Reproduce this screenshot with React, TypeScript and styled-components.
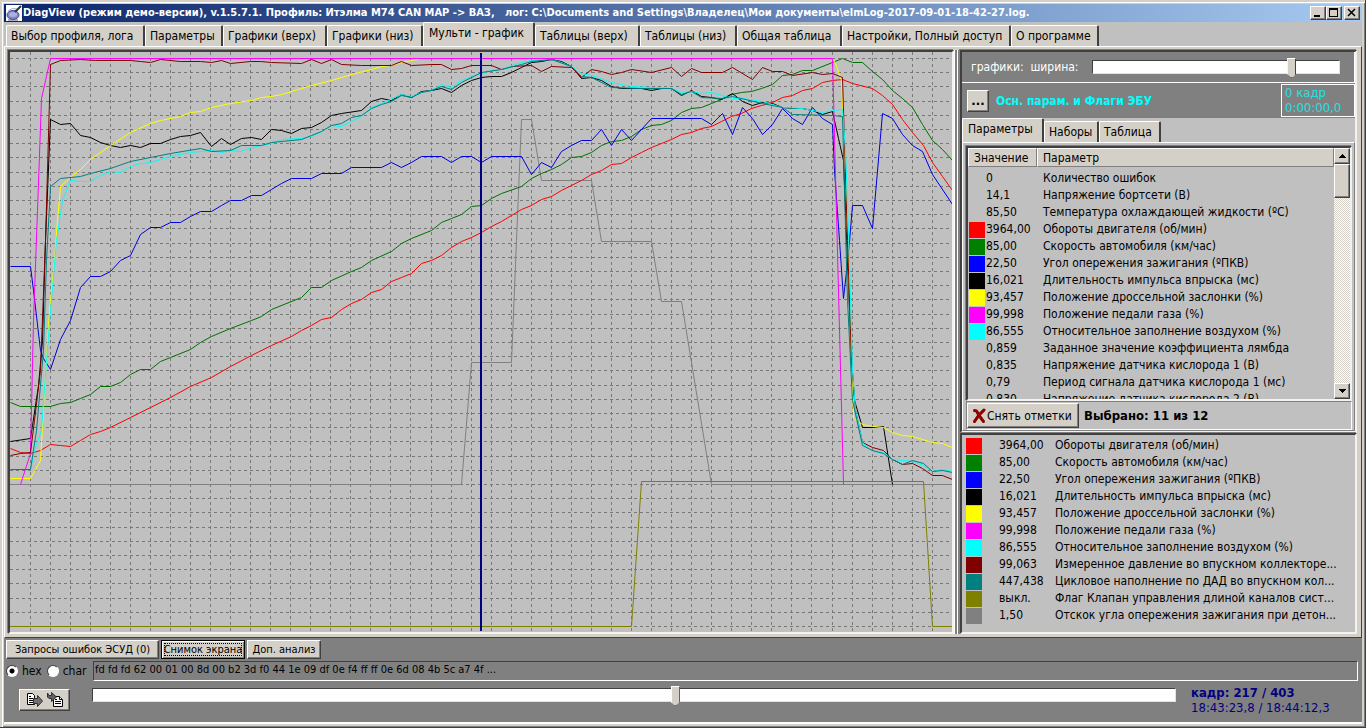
import React, { useState } from "react";
import styled, { createGlobalStyle, css } from "styled-components";

const face = "#d4d0c8";
const silver = "#c0c0c0";
const gray = "#808080";
const dark = "#404040";

const Global = createGlobalStyle`
  * { box-sizing: border-box; }
  body { margin: 0; background: ${face}; }
  body, button, input, table {
    font-family: "DejaVu Sans Condensed", "DejaVu Sans", sans-serif;
    font-size: 12px;
    color: #000;
  }
`;

const raised = css`
  border: 1px solid;
  border-color: #fff ${dark} ${dark} #fff;
  box-shadow: inset -1px -1px 0 ${gray};
  background: ${face};
`;

const sunken = css`
  border: 2px solid;
  border-color: ${dark} #f4f2ee #f4f2ee ${dark};
  box-shadow: -1px -1px 0 ${gray};
`;

const Frame = styled.div`
  display: flex;
  flex-direction: column;
  min-height: 100vh;
  padding: 4px;
  background: ${face};
  box-shadow: inset -1px -1px 0 ${dark}, inset 2px 2px 0 ${face}, inset 3px 3px 0 #fff,
    inset -2px -2px 0 ${gray};
`;

const TitleBar = styled.header`
  display: flex;
  align-items: center;
  height: 18px;
  padding: 0 2px;
  background: linear-gradient(to right, #0a246a, #a6caf0);
`;

const Title = styled.h1`
  flex: 1;
  margin: 0 0 0 1px;
  overflow: hidden;
  color: #fff;
  font-size: 11px;
  font-weight: bold;
  line-height: 18px;
  white-space: pre;
`;

const CaptionButton = styled.button<{ $apart?: boolean }>`
  ${raised}
  display: flex;
  width: 16px;
  height: 14px;
  padding: 0;
  margin-left: ${(p) => (p.$apart ? 2 : 0)}px;
`;

const TabStrip = styled.nav<{ $inner?: boolean }>`
  position: relative;
  display: flex;
  align-items: flex-end;
  height: 24px;
  padding-left: ${(p) => (p.$inner ? 0 : 2)}px;
  background: ${silver};
`;

const Tab = styled.button<{ $width: number; $active?: boolean }>`
  flex: 0 0 ${(p) => p.$width}px;
  height: ${(p) => (p.$active ? 24 : 21)}px;
  padding: ${(p) => (p.$active ? "0 0 3px 5px" : "0 0 0 4px")};
  border: solid;
  border-width: 1px 2px 0 1px;
  border-color: #fff ${dark} #fff #fff;
  border-radius: 2px 2px 0 0;
  background: ${face};
  text-align: left;
  white-space: nowrap;
`;

const Page = styled.main`
  display: flex;
  flex: 1;
  padding: 3px 4px 3px 3px;
  border: 1px solid;
  border-color: #fff ${dark} ${dark} #fff;
  background: ${face};
`;

const ChartBox = styled.section`
  ${sunken}
  display: flex;
  flex: 1;
  flex-direction: column;
  min-width: 0;
  background: ${silver};
`;

const ChartSvg = styled.svg`
  display: block;
  flex: 1 1 0;
  width: 100%;
  min-height: 0;
`;

const Splitter = styled.div`
  width: 6px;
  background: linear-gradient(
    to right,
    #fff 0 1px,
    ${gray} 1px 3px,
    #fff 3px 4px,
    ${gray} 4px 6px
  );
`;

const Side = styled.aside`
  display: flex;
  flex: 0 0 397px;
  flex-direction: column;
  min-width: 0;
`;

const SideTop = styled.section`
  ${sunken}
  display: flex;
  flex: 1;
  flex-direction: column;
  background: ${silver};
`;

const WidthBar = styled.label`
  display: flex;
  align-items: center;
  height: 31px;
  padding: 0 14px 0 9px;
  border: 1px solid #fff;
  border-width: 0 1px 1px 0;
  background: ${gray};
  color: #fff;
  gap: 13px;
  white-space: pre;
`;

const Range = styled.input`
  flex: 1;
  min-width: 0;
  height: 20px;
  margin: 0;
  appearance: none;
  background: transparent;

  &::-webkit-slider-runnable-track {
    height: 14px;
    border: 1px solid;
    border-color: ${dark} #e4e2dc #e4e2dc ${dark};
    background: #fff;
  }
  &::-webkit-slider-thumb {
    width: 9px;
    height: 20px;
    margin-top: -3px;
    appearance: none;
    border: 1px solid;
    border-color: #fff ${dark} ${dark} #fff;
    background: ${face};
    clip-path: polygon(0 0, 100% 0, 100% 80%, 50% 100%, 0 80%);
  }
`;

const SetBar = styled.div`
  display: flex;
  align-items: center;
  height: 35px;
  padding-left: 5px;
  background: ${gray};
`;

const MoreButton = styled.button`
  ${raised}
  width: 22px;
  height: 22px;
  padding: 0;
  font-size: 13px;
  font-weight: bold;
`;

const SetName = styled.strong`
  flex: 1;
  margin-left: 7px;
  color: #00ffff;
`;

const FrameBox = styled.div`
  width: 74px;
  height: 33px;
  padding-left: 3px;
  border: 1px solid #fff;
  color: #20e0e0;
  font-size: 13px;
  line-height: 15px;
`;

const ListPage = styled.div`
  display: flex;
  flex: 1;
  flex-direction: column;
  padding: 3px 2px 0 3px;
  border: 1px solid;
  border-color: #fff ${gray} ${gray} #fff;
`;

const ListBox = styled.div`
  ${sunken}
  display: flex;
  flex: 1 1 0;
  min-height: 120px;
  overflow: hidden;
`;

const ListView = styled.div`
  flex: 1;
  height: 0;
  min-height: 100%;
  overflow: hidden;
`;

const DataTable = styled.table`
  width: 100%;
  border-collapse: separate;
  border-spacing: 0;
  table-layout: fixed;

  thead + tbody::before {
    content: "";
    display: block;
    height: 3px;
  }
`;

const HeadCell = styled.th<{ $width?: number }>`
  width: ${(p) => (p.$width ? `${p.$width}px` : "auto")};
  height: 19px;
  padding: 0 0 0 5px;
  border: 1px solid;
  border-color: #fff ${gray} ${gray} #fff;
  background: ${face};
  font-weight: normal;
  line-height: 16px;
  text-align: left;
`;

const Cell = styled.td<{ $pad: number; $width?: number }>`
  width: ${(p) => (p.$width ? `${p.$width}px` : "auto")};
  height: 17px;
  padding: 0 0 0 ${(p) => p.$pad}px;
  overflow: hidden;
  line-height: 17px;
  text-overflow: ellipsis;
  white-space: nowrap;
`;

const Value = styled.span`
  display: flex;
  align-items: center;
`;

const Swatch = styled.i<{ $color?: string; $gap: number }>`
  width: 16px;
  height: 16px;
  margin-right: ${(p) => p.$gap}px;
  background: ${(p) => p.$color ?? "transparent"};
`;

const ScrollBar = styled.div`
  display: flex;
  flex-direction: column;
  width: 16px;
  background: repeating-conic-gradient(#fff 0 25%, ${face} 0 50%) 0 0 / 2px 2px;
`;

const ScrollButton = styled.button`
  ${raised}
  display: flex;
  align-items: center;
  justify-content: center;
  height: 16px;
  padding: 0;
`;

const ScrollThumb = styled.div`
  ${raised}
  height: 34px;
  margin-bottom: auto;
`;

const ListFooter = styled.footer`
  display: flex;
  align-items: center;
  height: 29px;
  border: 1px solid;
  border-color: ${gray} #fff #fff ${gray};
`;

const ClearButton = styled.button`
  ${raised}
  display: flex;
  align-items: center;
  width: 112px;
  height: 25px;
  padding: 0 0 0 4px;
  gap: 1px;
  white-space: nowrap;
`;

const Selected = styled.strong`
  margin-left: 5px;
  font-size: 13px;
`;

const Legend = styled.section`
  ${sunken}
  height: 201px;
  padding: 2px 1px 0 4px;
  background: ${silver};
`;

const BottomBar = styled.footer`
  display: flex;
  flex-direction: column;
  height: 86px;
  padding: 2px 4px 0 2px;
  border-bottom: 2px solid #fff;
  background: ${gray};
`;

const ActionRow = styled.div`
  display: flex;
  gap: 2px;
`;

const ActionButton = styled.button<{ $width: number; $focused?: boolean }>`
  ${raised}
  width: ${(p) => p.$width}px;
  height: 19px;
  padding: 0;
  font-size: 11px;
  white-space: nowrap;
  ${(p) =>
    p.$focused &&
    css`
      border-color: #000;
      box-shadow: inset 1px 1px 0 #fff, inset -1px -1px 0 ${gray};
      outline: 1px dotted #000;
      outline-offset: -4px;
    `}
`;

const DumpRow = styled.div`
  display: grid;
  grid-template-columns: 87px 1fr;
  align-items: center;
  height: 21px;
  margin-top: 1px;
`;

const Modes = styled.div`
  display: flex;
  align-items: center;
  gap: 5px;
`;

const Mode = styled.label`
  display: flex;
  align-items: center;
  gap: 4px;
`;

const Radio = styled.input`
  width: 12px;
  height: 12px;
  margin: 0;
  appearance: none;
  border: 1px solid;
  border-color: ${dark} #fff #fff ${dark};
  border-radius: 50%;
  background: #fff;

  &:checked {
    background: radial-gradient(circle, #000 0 2px, #fff 3px);
  }
`;

const Dump = styled.input`
  width: 100%;
  height: 20px;
  padding: 0 0 2px 1px;
  border: 1px solid;
  border-color: ${dark} #fff #fff ${dark};
  background: ${gray};
  font-size: 11px;
`;

const FrameRow = styled.div`
  display: grid;
  grid-template-columns: 86px 1fr 182px;
  align-items: start;
  margin-top: 4px;
`;

const StepButton = styled.button`
  ${raised}
  display: flex;
  align-items: center;
  justify-content: center;
  width: 51px;
  height: 22px;
  margin: 4px 0 0 13px;
  padding: 0;
`;

const FrameInfo = styled.div`
  padding-left: 15px;
  color: #000080;
  font-size: 13px;
  line-height: 15px;
`;

const tabs: [string, number][] = [
  ["Выбор профиля, лога", 139],
  ["Параметры", 78],
  ["Графики (верх)", 104],
  ["Графики (низ)", 96],
  ["Мульти - график", 112],
  ["Таблицы (верх)", 105],
  ["Таблицы (низ)", 97],
  ["Общая таблица", 105],
  ["Настройки, Полный доступ", 169],
  ["О программе", 88],
];

const sideTabs: [string, number][] = [
  ["Параметры", 82],
  ["Наборы", 55],
  ["Таблица", 62],
];

type Row = [string, string, string?];

const params: Row[] = [
  ["0", "Количество ошибок"],
  ["14,1", "Напряжение бортсети (В)"],
  ["85,50", "Температура охлаждающей жидкости (ºC)"],
  ["3964,00", "Обороты двигателя (об/мин)", "#ff0000"],
  ["85,00", "Скорость автомобиля (км/час)", "#008000"],
  ["22,50", "Угол опережения зажигания (ºПКВ)", "#0000ff"],
  ["16,021", "Длительность импульса впрыска (мс)", "#000000"],
  ["93,457", "Положение дроссельной заслонки (%)", "#ffff00"],
  ["99,998", "Положение педали газа (%)", "#ff00ff"],
  ["86,555", "Относительное заполнение воздухом (%)", "#00ffff"],
  ["0,859", "Заданное значение коэффициента лямбда"],
  ["0,835", "Напряжение датчика кислорода 1 (В)"],
  ["0,79", "Период сигнала датчика кислорода 1 (мс)"],
  ["0,830", "Напряжение датчика кислорода 2 (В)"],
];

const legend: Row[] = [
  ...params.slice(3, 10),
  ["99,063", "Измеренное давление во впускном коллекторе...", "#800000"],
  ["447,438", "Цикловое наполнение по ДАД во впускном кол...", "#008080"],
  ["выкл.", "Флаг Клапан управления длиной каналов сист...", "#808000"],
  ["1,50", "Отскок угла опережения зажигания при детон...", "#808080"],
];

const series: [string, string][] = [
  ["#808080", "10,484 461,484 471,362 511,362 516,240 521,119 531,119 541,180 591,180 601,241 651,241 661,301 681,301 711,484 952,484"],
  ["#ff0000", "10,448 20,452 30,453 40,450 50,444 60,445 70,446 80,440 90,434 100,431 110,427 130,417 150,407 170,397 190,386 211,377 230,366 251,355 271,345 291,336 301,330 311,325 321,319 331,317 341,309 351,303 361,299 371,292 381,289 391,281 401,277 411,273 421,263 431,260 441,255 451,247 461,241 471,237 481,232 491,226 501,221 511,215 521,209 531,205 541,199 551,196 561,190 571,185 581,180 591,174 601,170 611,164 621,163 631,157 641,152 651,147 661,143 671,139 681,134 691,132 701,128 711,126 721,121 731,116 741,113 751,108 761,105 772,102 782,97 792,95 802,90 812,88 822,82 832,80 842,79 852,83 872,88 882,95 892,104 902,119 912,132 923,145 932,162 942,176 952,190"],
  ["#007000", "10,402 20,406 50,406 60,403 70,402 80,398 90,394 100,386 110,386 120,382 130,374 140,369 150,369 160,361 170,357 190,349 200,342 211,336 230,328 251,320 261,316 271,309 301,297 311,287 321,287 331,280 351,271 361,267 371,260 391,251 401,243 411,238 431,230 441,222 451,218 461,214 471,206 481,205 491,198 501,193 521,186 531,178 541,173 551,169 561,164 571,157 581,156 591,152 601,145 611,141 621,140 631,136 641,129 651,125 661,124 671,120 681,112 691,108 701,107 711,103 721,99 731,94 741,92 751,91 761,88 772,84 782,75 792,74 802,70 812,70 832,62 842,58 852,62 862,62 872,71 882,79 892,90 902,98 912,107 922,124 932,140 942,149 952,160"],
  ["#0000e0", "10,266 30,266 33,290 40,350 43,358 50,369 60,339 70,320 80,287 90,276 100,276 110,271 120,260 130,255 140,234 150,227 160,227 170,222 180,222 190,216 200,211 211,211 221,205 230,200 241,200 251,195 261,195 271,189 281,183 291,178 311,178 321,173 341,173 351,167 381,167 391,162 401,167 411,162 421,156 441,156 451,162 461,156 471,156 481,162 491,156 521,156 531,174 541,162 551,167 561,151 571,145 581,140 591,140 601,129 611,145 621,129 631,140 651,118 701,118 711,124 722,113 732,134 742,107 752,118 762,134 772,124 782,108 792,118 802,124 812,107 822,118 832,124 834,170 839,240 843,298 848,253 852,205 862,205 872,228 882,113 892,118 902,134 912,145 922,151 932,174 952,204"],
  ["#000000", "10,441 30,438 32,425 38,385 42,340 45,240 50,119 60,124 70,123 80,135 90,137 100,142 110,145 120,147 130,145 140,147 150,143 160,143 170,139 180,136 190,135 200,132 211,146 221,138 230,144 241,138 251,137 261,139 271,129 281,130 291,133 301,128 311,127 321,122 331,115 341,113 361,110 371,101 381,98 391,100 401,94 411,97 421,91 431,90 441,88 451,92 461,85 471,80 481,77 491,76 501,76 511,72 521,67 531,62 541,61 551,59 561,61 571,66 581,78 591,77 601,80 611,86 621,88 641,88 651,90 661,88 671,88 681,95 691,90 701,96 711,97 721,99 732,93 742,101 752,105 762,102 772,103 782,107 792,108 802,108 812,110 822,114 832,111 838,138 843,160 847,260 851,360 854,400 862,427 875,427 883,426 892,484"],
  ["#ffff00", "10,478 30,478 40,460 44,390 49,310 54,260 57,220 60,186 70,177 80,169 90,159 110,145 130,132 150,123 160,120 180,116 190,112 200,111 211,107 230,103 251,100 261,97 271,96 281,94 311,85 331,80 351,74 371,69 381,66 391,65 401,62 421,58 832,58 835,63 841,80 845,170 849,300 853,418 862,424 872,426 883,427 892,432 902,435 912,436 932,442 942,443 952,447"],
  ["#ff00ff", "20,484 30,453 33,320 37,210 41,98 50,58 832,58 843,484"],
  ["#800000", "10,455 20,453 30,452 34,420 40,370 45,240 50,64 60,60 80,59 95,60 130,60 140,61 150,62 160,59 180,61 200,61 211,62 221,60 230,63 250,61 260,61 271,62 301,63 311,59 321,63 331,59 341,64 361,65 391,65 401,61 411,65 431,64 441,64 451,69 461,68 471,65 491,65 501,69 511,66 531,65 541,71 551,66 571,67 581,77 591,69 601,71 611,74 621,72 631,69 651,72 671,67 681,76 691,68 701,72 722,72 732,67 752,79 762,67 772,71 782,71 792,75 812,72 822,74 832,73 842,77 847,240 851,360 855,410 862,442 872,447 883,450 892,459 902,464 912,463 922,468 932,475 942,475 952,479"],
  ["#00ffff", "10,469 30,469 34,450 41,430 46,360 50,310 56,240 62,200 70,180 80,181 90,181 100,175 110,171 120,172 130,166 140,163 150,162 170,156 190,152 211,150 221,152 230,150 240,151 251,147 261,145 271,143 281,139 301,138 311,136 321,131 331,125 341,126 351,121 361,116 371,107 381,103 401,94 411,96 421,92 431,90 441,84 451,87 461,80 481,73 491,70 501,69 521,62 531,60 551,59 561,62 571,66 581,73 591,75 611,82 631,86 671,88 681,92 691,91 701,93 711,92 721,95 732,98 742,98 762,101 782,107 802,108 822,112 832,110 842,109 845,150 849,260 852,370 855,410 862,442 872,451 883,452 892,459 912,461 923,465 932,471 942,469 952,471"],
  ["#008080", "10,469 30,469 36,430 43,350 46,260 49,205 50,186 60,178 80,176 90,173 110,168 130,161 150,157 170,153 200,148 211,151 230,150 241,145 261,145 271,142 301,139 311,135 321,131 331,125 341,123 351,117 361,115 371,108 381,104 391,101 401,95 411,97 421,92 431,90 441,86 451,89 461,82 481,72 501,69 521,64 531,61 551,59 571,66 581,76 591,77 611,87 641,88 671,88 681,94 691,91 701,97 722,98 732,96 762,103 782,107 792,114 832,115 842,116 847,300 852,400 862,445 872,450 883,453 892,459 902,464 912,460 923,463 932,471 942,470 952,472"],
  ["#808000", "10,626 631,626 641,481 923,481 932,626 952,626"],
];

const columns = Array.from({ length: 46 }, (_, i) => Math.floor(30 + i * 20.05));
const rows = Array.from({ length: 41 }, (_, i) => Math.round(58 + i * 14.2));

function Chart() {
  return (
    <ChartSvg viewBox="10 52 942 580" preserveAspectRatio="none">
      <g stroke="#787878" strokeDasharray="3 3" shapeRendering="crispEdges">
        {columns.map((x) => (
          <line key={x} x1={x + 0.5} x2={x + 0.5} y1="52" y2="632" />
        ))}
        {rows.map((y) => (
          <line key={y} x1="10" x2="952" y1={y + 0.5} y2={y + 0.5} />
        ))}
      </g>
      <g fill="none" transform="translate(0.5 0.5)" strokeLinejoin="round">
        {series.map(([color, points]) => (
          <polyline key={color} points={points} stroke={color} />
        ))}
      </g>
      <rect x="480" y="53" width="2" height="578" fill="#000080" />
    </ChartSvg>
  );
}

function Tabs({ items, initial, inner }: { items: [string, number][]; initial: number; inner?: boolean }) {
  const [active, setActive] = useState(initial);
  return (
    <TabStrip $inner={inner}>
      {items.map(([name, width], i) => (
        <Tab key={name} $width={width} $active={i === active} onClick={() => setActive(i)}>
          {name}
        </Tab>
      ))}
    </TabStrip>
  );
}

function AppIcon() {
  return (
    <svg width="16" height="16" viewBox="0 0 16 16">
      <rect width="16" height="16" fill="#fff" />
      <ellipse cx="7" cy="10" rx="6" ry="4.5" fill="#8084c8" stroke="#484888" />
      <ellipse cx="7" cy="9.5" rx="4" ry="2.5" fill="#a8b0e8" />
      <path d="M2 6 Q6 2 11 4" stroke="#a0a8c8" fill="none" />
      <path d="M9 7 L15 1" stroke="#303030" strokeWidth="2" />
      <path d="M2 15 H12" stroke="#606078" />
    </svg>
  );
}

function Arrow({ up }: { up?: boolean }) {
  return (
    <svg width="7" height="4" viewBox="0 0 7 4" shapeRendering="crispEdges">
      <path d={up ? "M0 4 L3.5 0 L7 4 Z" : "M0 0 L3.5 4 L7 0 Z"} />
    </svg>
  );
}

function CrossIcon() {
  return (
    <svg width="14" height="16" viewBox="0 0 14 16" fill="none" stroke="#900000" strokeLinecap="round">
      <path d="M2.5 2.5 L4.5 3 Q7 8 11.5 13.5" strokeWidth="3" />
      <path d="M12 2 Q6 7 2.5 13.5" strokeWidth="3" />
    </svg>
  );
}

function StepIcon() {
  return (
    <svg width="38" height="16" viewBox="0 0 38 16">
      <g fill="#fff" stroke="#000">
        <path d="M1.5 1.5 H6.5 L8.5 3.5 V12.5 H1.5 Z" />
        <path d="M3 4.5 H5 M3 6.5 H7 M3 8.5 H7 M3 10.5 H7" />
        <path d="M27.500 4.500 H33.500 L36.500 7.500 V14.500 H27.500 Z" />
        <path d="M33.500 4.500 V7.500 H36 M29 9.500 H35 M29 11.500 H35 M29 7.500 H31" />
      </g>
      <path d="M7.500 6.500 H11.500 V3.500 L16.500 9 L11.500 14.500 V11.500 H7.500 Z" fill="#707070" stroke="#303030" />
      <path d="M21.500 1 L23 3.500 H25.500 V0.500 L30.500 5 L25.500 9.500 V6.500 H23 L21.500 5 Z" fill="#606060" stroke="#303030" />
    </svg>
  );
}

export default function App() {
  return (
    <Frame>
      <Global />
      <TitleBar>
        <AppIcon />
        <Title>
          {"DiagView (режим демо-версии), v.1.5.7.1. Профиль: Итэлма M74 CAN MAP -> ВАЗ,   лог: C:\\Documents and Settings\\Владелец\\Мои документы\\elmLog-2017-09-01-18-42-27.log."}
        </Title>
        <CaptionButton aria-label="Свернуть">
          <svg width="14" height="12" shapeRendering="crispEdges">
            <rect x="3" y="8" width="6" height="2" />
          </svg>
        </CaptionButton>
        <CaptionButton aria-label="Восстановить">
          <svg width="14" height="12" shapeRendering="crispEdges">
            <path d="M2 1 H11 V10 H2 Z M3 3 V9 H10 V3 Z" fillRule="evenodd" />
          </svg>
        </CaptionButton>
        <CaptionButton aria-label="Закрыть" $apart>
          <svg width="14" height="12">
            <path d="M3 2 L10 9 M10 2 L3 9" stroke="#000" strokeWidth="1.500" />
          </svg>
        </CaptionButton>
      </TitleBar>
      <Tabs items={tabs} initial={4} />

      <Page>
        <ChartBox>
          <Chart />
        </ChartBox>
        <Splitter />
        <Side>
          <SideTop>
            <WidthBar>
              <span>графики:  ширина:</span>
              <Range type="range" min="0" max="100" defaultValue="82" />
            </WidthBar>
            <SetBar>
              <MoreButton>...</MoreButton>
              <SetName>Осн. парам. и Флаги ЭБУ</SetName>
              <FrameBox>
                0 кадр
                <br />
                0:00:00,0
              </FrameBox>
            </SetBar>
            <Tabs items={sideTabs} initial={0} inner />
            <ListPage>
              <ListBox>
                <ListView>
                  <DataTable>
                    <thead>
                      <tr>
                        <HeadCell $width={69}>Значение</HeadCell>
                        <HeadCell>Параметр</HeadCell>
                      </tr>
                    </thead>
                    <tbody>
                      {params.map(([value, name, color]) => (
                        <tr key={name}>
                          <Cell $pad={1}>
                            <Value>
                              <Swatch $color={color} $gap={1} />
                              {value}
                            </Value>
                          </Cell>
                          <Cell $pad={6}>{name}</Cell>
                        </tr>
                      ))}
                    </tbody>
                  </DataTable>
                </ListView>
                <ScrollBar>
                  <ScrollButton aria-label="Вверх">
                    <Arrow up />
                  </ScrollButton>
                  <ScrollThumb />
                  <ScrollButton aria-label="Вниз">
                    <Arrow />
                  </ScrollButton>
                </ScrollBar>
              </ListBox>
              <ListFooter>
                <ClearButton>
                  <CrossIcon />
                  Снять отметки
                </ClearButton>
                <Selected>Выбрано: 11 из 12</Selected>
              </ListFooter>
            </ListPage>
          </SideTop>
          <Legend>
            <DataTable>
              <tbody>
                {legend.map(([value, name, color]) => (
                  <tr key={name}>
                    <Cell $pad={0} $width={89}>
                      <Value>
                        <Swatch $color={color} $gap={17} />
                        {value}
                      </Value>
                    </Cell>
                    <Cell $pad={0}>{name}</Cell>
                  </tr>
                ))}
              </tbody>
            </DataTable>
          </Legend>
        </Side>
      </Page>

      <BottomBar>
        <ActionRow>
          <ActionButton $width={153}>Запросы ошибок ЭСУД (0)</ActionButton>
          <ActionButton $width={84} $focused>
            Снимок экрана
          </ActionButton>
          <ActionButton $width={74}>Доп. анализ</ActionButton>
        </ActionRow>
        <DumpRow>
          <Modes>
            <Mode>
              <Radio type="radio" name="mode" defaultChecked />
              hex
            </Mode>
            <Mode>
              <Radio type="radio" name="mode" />
              char
            </Mode>
          </Modes>
          <Dump
            readOnly
            aria-label="Данные кадра"
            defaultValue="fd fd fd 62 00 01 00 8d 00 b2 3d f0 44 1e 09 df 0e f4 ff ff 0e 6d 08 4b 5c a7 4f ..."
          />
        </DumpRow>
        <FrameRow>
          <StepButton aria-label="Перейти к кадру">
            <StepIcon />
          </StepButton>
          <Range type="range" min="0" max="403" defaultValue="217" aria-label="Кадр" />
          <FrameInfo>
            <strong>кадр: 217 / 403</strong>
            <br />
            18:43:23,8 / 18:44:12,3
          </FrameInfo>
        </FrameRow>
      </BottomBar>
    </Frame>
  );
}
